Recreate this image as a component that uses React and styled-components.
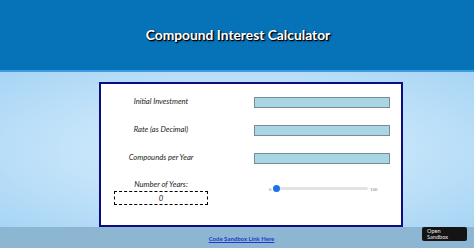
import React from "react";
import styled, { createGlobalStyle } from "styled-components";

const Global = createGlobalStyle`
  html, body { margin: 0; padding: 0; }
  body { font-family: "Lato", "Open Sans", sans-serif; }
  #root { height: 248px; }
`;

const Page = styled.div`
  display: flex;
  flex-direction: column;
  width: 474px;
  height: 248px;
  overflow: hidden;
  position: relative;
`;

const Header = styled.header`
  height: 70px;
  background: #0672b8;
  border-bottom: 2px solid #3d9de2;
  display: flex;
  align-items: center;
  justify-content: center;
  flex-shrink: 0;
`;

const Title = styled.h1`
  margin: 0 0 0 2px;
  padding-bottom: 1px;
  font-family: "Lato", sans-serif;
  font-weight: 700;
  font-size: 13.8px;
  color: #fff;
  text-shadow: 1px 1px 0 #000, 1px 1px 2px #000;
`;

const Main = styled.main`
  flex: 1;
  background: radial-gradient(ellipse at 50% 50%, #e0f1fc 0%, #c6e5fa 45%, #a7d5f5 100%);
  padding: 10px 0 0 99px;
  display: flex;
  align-items: flex-start;
`;

const Card = styled.section`
  box-sizing: border-box;
  width: 304px;
  height: 145px;
  background: #fff;
  border: 2px solid #0d0d82;
  display: grid;
  grid-template-columns: 120px 1fr;
  grid-template-rows: 28px 28px 28px auto;
  padding-top: 4px;
`;

const Label = styled.div`
  font-family: "Lato", sans-serif;
  font-style: italic;
  font-size: 7.6px;
  color: #222;
  text-align: center;
  align-self: center;
  margin-top: ${(p) => p.$offset || 0}px;
`;

const Field = styled.input`
  box-sizing: border-box;
  align-self: center;
  margin: 0 0 0 33px;
  width: 136px;
  height: 11px;
  padding: 0;
  background: #a9d6e4;
  border: 1px solid #7a8c93;
  outline: none;
`;

const YearsCell = styled.div`
  display: flex;
  flex-direction: column;
  align-items: center;
  padding-top: 7px;
  gap: 2px;
`;

const YearsBox = styled.div`
  box-sizing: border-box;
  width: 94px;
  height: 14px;
  border: 1px dashed #000;
  display: flex;
  align-items: center;
  justify-content: center;
  font-family: "Lato", sans-serif;
  font-style: italic;
  font-size: 7.6px;
  color: #222;
`;

const SliderCell = styled.div`
  display: flex;
  align-items: center;
  padding: 12px 0 0 48px;
  align-self: start;
`;

const Tick = styled.span`
  font-family: "Lato", sans-serif;
  font-size: 4px;
  color: #777;
  margin-top: 3px;
`;

const Track = styled.div`
  position: relative;
  width: 95px;
  height: 3px;
  background: #e3e3e3;
  border-radius: 2px;
  margin: 0 2px 0 2px;
`;

const Thumb = styled.div`
  position: absolute;
  left: 0;
  top: 50%;
  width: 7px;
  height: 7px;
  margin-top: -3.5px;
  border-radius: 50%;
  background: #1a73e8;
`;

const Footer = styled.footer`
  height: 21px;
  background: #8db6d3;
  display: flex;
  align-items: center;
  justify-content: center;
  flex-shrink: 0;
`;

const Link = styled.a`
  font-family: "Lato", sans-serif;
  font-weight: 700;
  font-size: 6px;
  color: #2338cc;
  text-decoration: underline;
  margin-left: 9px;
  margin-top: 1px;
`;

const SandboxButton = styled.button`
  position: absolute;
  right: 7px;
  bottom: 7px;
  width: 45px;
  height: 14px;
  background: #141414;
  color: #e8e8e8;
  border: none;
  border-radius: 2px;
  padding: 0 0 0 5px;
  text-align: left;
  font-family: "Lato", sans-serif;
  font-size: 5.6px;
  line-height: 6.5px;
`;

export default function App() {
  return (
    <>
      <Global />
      <Page>
        <Header>
          <Title>Compound Interest Calculator</Title>
        </Header>
        <Main>
          <Card>
            <Label $offset={-2}>Initial Investment</Label>
            <Field />
            <Label $offset={-3}>Rate (as Decimal)</Label>
            <Field />
            <Label $offset={-3}>Compounds per Year</Label>
            <Field />
            <YearsCell>
              <Label>Number of Years:</Label>
              <YearsBox>0</YearsBox>
            </YearsCell>
            <SliderCell>
              <Tick>0</Tick>
              <Track>
                <Thumb />
              </Track>
              <Tick>100</Tick>
            </SliderCell>
          </Card>
        </Main>
        <Footer>
          <Link href="#">Code Sandbox Link Here</Link>
        </Footer>
        <SandboxButton>
          Open
          <br />
          Sandbox
        </SandboxButton>
      </Page>
    </>
  );
}
